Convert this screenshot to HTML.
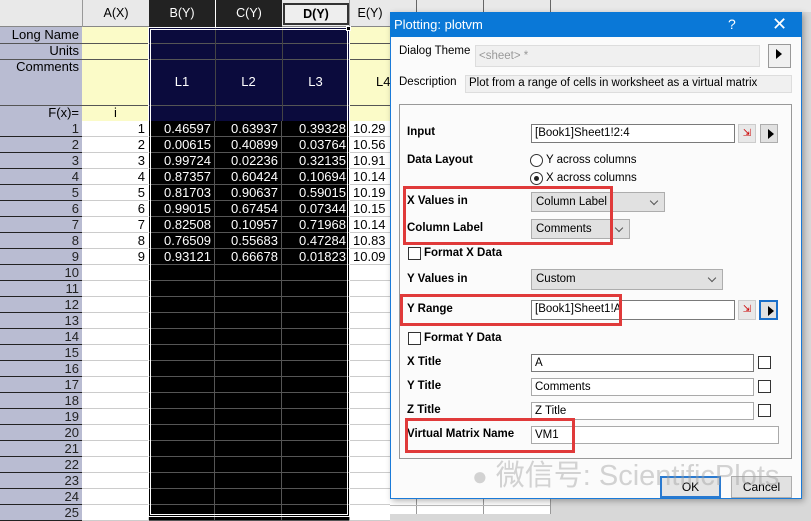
<!DOCTYPE html>
<html><head><meta charset="utf-8"><style>
*{box-sizing:border-box;margin:0;padding:0}
body{width:811px;height:514px;overflow:hidden;background:#d8d8d8;font-family:"Liberation Sans",Arial,sans-serif;position:relative;font-size:12px}
.a{position:absolute}
.r{position:absolute;left:0;width:390px;height:16px;font-size:13px;line-height:16px}
.r>div{position:absolute;top:0;height:16px;text-align:right;padding-right:3px}
.h{left:0;width:82px;background:#b9bcd2;border-bottom:1px solid #222;color:#222}
.ca{left:82px;width:67px;background:#fff;border-bottom:1px solid #ccc;border-right:1px solid #ccc}
.cb{left:149px;width:66px;background:#000;color:#fff;border-bottom:1px solid #555;border-right:1px solid #555}
.cc{left:215px;width:67px;background:#000;color:#fff;border-bottom:1px solid #555;border-right:1px solid #555}
.cd{left:282px;width:67px;background:#000;color:#fff;border-bottom:1px solid #555}
.ce{left:349px;width:41px;background:#fff;border-bottom:1px solid #ccc;border-left:1px solid #999;text-align:left!important;padding-left:3px}
.lbl{position:absolute;font-size:11.5px;color:#000}
.b{font-weight:bold}
.tb{position:absolute;background:#fff;border:1px solid #7a7a7a;font-size:11.5px;padding-left:3px;line-height:16px}
.cmb{position:absolute;background:#e1e1e1;border:1px solid #adadad;font-size:11.5px;padding-left:4px;overflow:hidden;white-space:nowrap}
.cmb:after{content:"";position:absolute;right:7px;top:5px;width:5px;height:5px;border-right:1px solid #555;border-bottom:1px solid #555;transform:rotate(45deg)}
.btn{position:absolute;background:#e1e1e1;border:1px solid #adadad}
.btn:after{content:"";position:absolute;left:7px;top:4px;border-left:6px solid #000;border-top:5px solid transparent;border-bottom:5px solid transparent}
.ck{position:absolute;width:13px;height:13px;border:1px solid #333;background:#fff}
.red{position:absolute;border:3px solid #e03a3a}
</style></head><body>
<div class="a" style="left:0;top:0;width:390px;height:27px;background:#e9e9e9;border-bottom:1px solid #888"></div>
<div class="a" style="left:82px;top:0;width:67px;height:27px;border-left:1px solid #999;text-align:center;line-height:27px;font-size:12.5px">A(X)</div>
<div class="a" style="left:149px;top:0;width:66px;height:27px;background:#222;color:#fff;text-align:center;line-height:27px;font-size:12.5px">B(Y)</div>
<div class="a" style="left:215px;top:0;width:67px;height:27px;background:#222;color:#fff;text-align:center;line-height:27px;font-size:12.5px;border-left:1px solid #fff">C(Y)</div>
<div class="a" style="left:283px;top:3px;width:66px;height:22px;background:#eee;border:2px solid #333;text-align:center;line-height:18px;font-size:12.5px;font-weight:bold">D(Y)</div>
<div class="a" style="left:349px;top:0;width:41px;height:27px;border-left:1px solid #999;text-align:center;line-height:27px;font-size:12.5px">E(Y)</div>
<div class="a" style="left:0;top:27px;width:82px;height:94px;background:#b9bcd2"></div>
<div class="a" style="left:82px;top:27px;width:67px;height:94px;background:#fbfbc8"></div>
<div class="a" style="left:349px;top:27px;width:41px;height:94px;background:#fbfbc8"></div>
<div class="a" style="left:149px;top:27px;width:200px;height:94px;background:#0b0b3d"></div>
<div class="a" style="left:0;top:43px;width:390px;border-top:1px solid #555"></div>
<div class="a" style="left:0;top:59px;width:390px;border-top:1px solid #555"></div>
<div class="a" style="left:0;top:105px;width:390px;border-top:1px solid #555"></div>
<div class="a" style="left:0;top:121px;width:390px;border-top:1px solid #222"></div>
<div class="a" style="left:215px;top:27px;height:94px;border-left:1px solid #444"></div>
<div class="a" style="left:282px;top:27px;height:94px;border-left:1px solid #444"></div>
<div class="a" style="left:0;top:27px;width:79px;text-align:right;font-size:13px">Long Name</div>
<div class="a" style="left:0;top:43px;width:79px;text-align:right;font-size:13px">Units</div>
<div class="a" style="left:0;top:59px;width:79px;text-align:right;font-size:13px">Comments</div>
<div class="a" style="left:0;top:105px;width:79px;text-align:right;font-size:13px">F(x)=</div>
<div class="a" style="left:82px;top:105px;width:67px;text-align:center;font-size:13px">i</div>
<div class="a" style="left:149px;top:74px;width:66px;text-align:center;color:#fff;font-size:13px">L1</div>
<div class="a" style="left:215px;top:74px;width:67px;text-align:center;color:#fff;font-size:13px">L2</div>
<div class="a" style="left:282px;top:74px;width:67px;text-align:center;color:#fff;font-size:13px">L3</div>
<div class="a" style="left:376px;top:74px;font-size:13px">L4</div>
<div class="r" style="top:121px"><div class="h">1</div><div class="ca">1</div><div class="cb">0.46597</div><div class="cc">0.63937</div><div class="cd">0.39328</div><div class="ce">10.29</div></div>
<div class="r" style="top:137px"><div class="h">2</div><div class="ca">2</div><div class="cb">0.00615</div><div class="cc">0.40899</div><div class="cd">0.03764</div><div class="ce">10.56</div></div>
<div class="r" style="top:153px"><div class="h">3</div><div class="ca">3</div><div class="cb">0.99724</div><div class="cc">0.02236</div><div class="cd">0.32135</div><div class="ce">10.91</div></div>
<div class="r" style="top:169px"><div class="h">4</div><div class="ca">4</div><div class="cb">0.87357</div><div class="cc">0.60424</div><div class="cd">0.10694</div><div class="ce">10.14</div></div>
<div class="r" style="top:185px"><div class="h">5</div><div class="ca">5</div><div class="cb">0.81703</div><div class="cc">0.90637</div><div class="cd">0.59015</div><div class="ce">10.19</div></div>
<div class="r" style="top:201px"><div class="h">6</div><div class="ca">6</div><div class="cb">0.99015</div><div class="cc">0.67454</div><div class="cd">0.07344</div><div class="ce">10.15</div></div>
<div class="r" style="top:217px"><div class="h">7</div><div class="ca">7</div><div class="cb">0.82508</div><div class="cc">0.10957</div><div class="cd">0.71968</div><div class="ce">10.14</div></div>
<div class="r" style="top:233px"><div class="h">8</div><div class="ca">8</div><div class="cb">0.76509</div><div class="cc">0.55683</div><div class="cd">0.47284</div><div class="ce">10.83</div></div>
<div class="r" style="top:249px"><div class="h">9</div><div class="ca">9</div><div class="cb">0.93121</div><div class="cc">0.66678</div><div class="cd">0.01823</div><div class="ce">10.09</div></div>
<div class="r" style="top:265px"><div class="h">10</div><div class="ca"></div><div class="cb"></div><div class="cc"></div><div class="cd"></div><div class="ce"></div></div>
<div class="r" style="top:281px"><div class="h">11</div><div class="ca"></div><div class="cb"></div><div class="cc"></div><div class="cd"></div><div class="ce"></div></div>
<div class="r" style="top:297px"><div class="h">12</div><div class="ca"></div><div class="cb"></div><div class="cc"></div><div class="cd"></div><div class="ce"></div></div>
<div class="r" style="top:313px"><div class="h">13</div><div class="ca"></div><div class="cb"></div><div class="cc"></div><div class="cd"></div><div class="ce"></div></div>
<div class="r" style="top:329px"><div class="h">14</div><div class="ca"></div><div class="cb"></div><div class="cc"></div><div class="cd"></div><div class="ce"></div></div>
<div class="r" style="top:345px"><div class="h">15</div><div class="ca"></div><div class="cb"></div><div class="cc"></div><div class="cd"></div><div class="ce"></div></div>
<div class="r" style="top:361px"><div class="h">16</div><div class="ca"></div><div class="cb"></div><div class="cc"></div><div class="cd"></div><div class="ce"></div></div>
<div class="r" style="top:377px"><div class="h">17</div><div class="ca"></div><div class="cb"></div><div class="cc"></div><div class="cd"></div><div class="ce"></div></div>
<div class="r" style="top:393px"><div class="h">18</div><div class="ca"></div><div class="cb"></div><div class="cc"></div><div class="cd"></div><div class="ce"></div></div>
<div class="r" style="top:409px"><div class="h">19</div><div class="ca"></div><div class="cb"></div><div class="cc"></div><div class="cd"></div><div class="ce"></div></div>
<div class="r" style="top:425px"><div class="h">20</div><div class="ca"></div><div class="cb"></div><div class="cc"></div><div class="cd"></div><div class="ce"></div></div>
<div class="r" style="top:441px"><div class="h">21</div><div class="ca"></div><div class="cb"></div><div class="cc"></div><div class="cd"></div><div class="ce"></div></div>
<div class="r" style="top:457px"><div class="h">22</div><div class="ca"></div><div class="cb"></div><div class="cc"></div><div class="cd"></div><div class="ce"></div></div>
<div class="r" style="top:473px"><div class="h">23</div><div class="ca"></div><div class="cb"></div><div class="cc"></div><div class="cd"></div><div class="ce"></div></div>
<div class="r" style="top:489px"><div class="h">24</div><div class="ca"></div><div class="cb"></div><div class="cc"></div><div class="cd"></div><div class="ce"></div></div>
<div class="r" style="top:505px"><div class="h">25</div><div class="ca"></div><div class="cb"></div><div class="cc"></div><div class="cd"></div><div class="ce"></div></div>
<div class="a" style="left:148px;top:27px;width:202px;height:490px;border:3px double #fff"></div>
<div class="a" style="left:346px;top:26px;width:5px;height:5px;background:#000;border:1px solid #fff"></div>
<div class="a" style="left:390px;top:0;width:421px;height:12px;background:#e9e9e9"></div>
<div class="a" style="left:416px;top:0;height:12px;border-left:1px solid #666"></div>
<div class="a" style="left:483px;top:0;height:12px;border-left:1px solid #666"></div>
<div class="a" style="left:550px;top:0;height:12px;border-left:1px solid #666"></div>
<div class="a" style="left:390px;top:498px;width:160px;height:16px;background:#fff"></div>
<div class="a" style="left:416px;top:498px;height:16px;border-left:1px solid #999"></div>
<div class="a" style="left:483px;top:498px;height:16px;border-left:1px solid #999"></div>
<div class="a" style="left:550px;top:498px;height:16px;border-left:1px solid #999"></div>
<div class="a" style="left:390px;top:505px;width:160px;border-top:1px solid #bbb"></div>
<div class="a" style="left:390px;top:12px;width:412px;height:487px;background:#fbfbfb;border:1px solid #1a7ad8;box-shadow:2px 2px 6px rgba(0,0,0,.3)"></div>
<div class="a" style="left:390px;top:12px;width:412px;height:25px;background:#0a78d7;color:#fff;font-size:13px;line-height:25px;padding-left:4px">Plotting: plotvm</div>
<div class="a" style="left:728px;top:12px;color:#fff;font-size:14px;line-height:25px">?</div>
<div class="a" style="left:772px;top:12px;color:#fff;font-size:18px;line-height:25px">✕</div>
<div class="lbl" style="left:399px;top:45px">Dialog Theme</div>
<div class="a" style="left:475px;top:45px;width:285px;height:22px;background:#f0f0f0;border:1px solid #ddd;color:#999;font-size:11.5px;padding:4px 3px">&lt;sheet&gt; *</div>
<div class="btn" style="left:768px;top:44px;width:23px;height:24px;background:#f0f0f0;border-color:#999"></div>
<div class="lbl" style="left:399px;top:76px">Description</div>
<div class="a" style="left:465px;top:75px;width:327px;height:18px;background:#f0f0f0;border:1px solid #ddd;font-size:11.5px;padding:1px 3px">Plot from a range of cells in worksheet as a virtual matrix</div>
<div class="a" style="left:399px;top:104px;width:393px;height:355px;border:1px solid #999"></div>
<div class="lbl b" style="left:407px;top:126px">Input</div>
<div class="tb" style="left:531px;top:124px;width:204px;height:19px">[Book1]Sheet1!2:4</div>
<div class="a" style="left:738px;top:124px;width:18px;height:19px;background:#e8e8e8;border:1px solid #ccc;font-size:10px;color:#c00;text-align:center;line-height:17px">⇲</div>
<div class="btn" style="left:760px;top:124px;width:18px;height:19px"></div>
<div class="lbl b" style="left:407px;top:154px">Data Layout</div>
<div class="a" style="left:530px;top:154px;width:13px;height:13px;border:1px solid #333;border-radius:50%;background:#fff"></div>
<div class="lbl" style="left:546px;top:154px">Y across columns</div>
<div class="a" style="left:530px;top:172px;width:13px;height:13px;border:1px solid #333;border-radius:50%;background:#fff"><div class="a" style="left:3px;top:3px;width:5px;height:5px;border-radius:50%;background:#222"></div></div>
<div class="lbl" style="left:546px;top:172px">X across columns</div>
<div class="lbl b" style="left:407px;top:195px">X Values in</div>
<div class="cmb" style="left:531px;top:192px;width:134px;height:20px;line-height:18px">Column Label</div>
<div class="lbl b" style="left:407px;top:222px">Column Label</div>
<div class="cmb" style="left:531px;top:219px;width:99px;height:20px;line-height:18px">Comments</div>
<div class="red" style="left:403px;top:186px;width:210px;height:59px"></div>
<div class="ck" style="left:408px;top:247px"></div>
<div class="lbl b" style="left:424px;top:247px">Format X Data</div>
<div class="lbl b" style="left:407px;top:273px">Y Values in</div>
<div class="cmb" style="left:531px;top:269px;width:192px;height:21px;line-height:19px">Custom</div>
<div class="lbl b" style="left:407px;top:303px">Y Range</div>
<div class="tb" style="left:531px;top:300px;width:204px;height:20px">[Book1]Sheet1!A</div>
<div class="red" style="left:400px;top:294px;width:222px;height:32px"></div>
<div class="a" style="left:738px;top:300px;width:18px;height:20px;background:#e8e8e8;border:1px solid #ccc;font-size:10px;color:#c00;text-align:center;line-height:18px">⇲</div>
<div class="btn" style="left:759px;top:300px;width:19px;height:20px;border:2px solid #1a6fc9"></div>
<div class="ck" style="left:408px;top:332px"></div>
<div class="lbl b" style="left:424px;top:332px">Format Y Data</div>
<div class="lbl b" style="left:407px;top:356px">X Title</div>
<div class="tb" style="left:531px;top:354px;width:223px;height:18px">A</div>
<div class="ck" style="left:758px;top:356px"></div>
<div class="lbl b" style="left:407px;top:380px">Y Title</div>
<div class="tb" style="left:531px;top:378px;width:223px;height:18px;border-color:#aaa">Comments</div>
<div class="ck" style="left:758px;top:380px"></div>
<div class="lbl b" style="left:407px;top:404px">Z Title</div>
<div class="tb" style="left:531px;top:402px;width:223px;height:18px;border-color:#aaa">Z Title</div>
<div class="ck" style="left:758px;top:404px"></div>
<div class="lbl b" style="left:407px;top:428px">Virtual Matrix Name</div>
<div class="tb" style="left:531px;top:426px;width:248px;height:18px;border-color:#aaa">VM1</div>
<div class="red" style="left:405px;top:418px;width:170px;height:35px"></div>
<div class="a" style="left:660px;top:476px;width:61px;height:22px;background:#e5e5e5;border:2px solid #2a7ad0;text-align:center;font-size:12px;line-height:18px">OK</div>
<div class="a" style="left:731px;top:476px;width:61px;height:22px;background:#e1e1e1;border:1px solid #adadad;text-align:center;font-size:12px;line-height:20px">Cancel</div>
<div class="a" style="left:472px;top:452px;font-size:29px;color:rgba(160,160,160,.45);font-family:'Liberation Sans','Noto Sans CJK SC',sans-serif;white-space:nowrap"><span style="font-size:26px">●</span> 微信号: ScientificPlots</div>
</body></html>
